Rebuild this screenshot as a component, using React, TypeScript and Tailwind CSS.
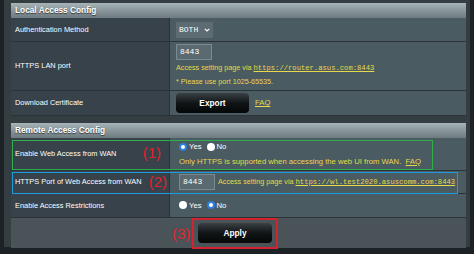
import React from "react";

const sans = { fontFamily: '"Liberation Sans", Arial, sans-serif' };

function SectionHeader({ title }: { title: string }) {
  return (
    <div className="flex h-[15px] items-center bg-gradient-to-b from-[#a6b3b7] to-[#6d7b80] px-[4px] text-[8.3px] font-bold text-white [text-shadow:0_1px_1px_#333]">
      {title}
    </div>
  );
}

function Row({
  label,
  height,
  pad = "pl-[6px]",
  children,
  extra,
}: {
  label: string;
  height: string;
  pad?: string;
  children: React.ReactNode;
  extra?: React.ReactNode;
}) {
  return (
    <div className={`flex border-b border-[#2b3337] ${height}`}>
      <div className="flex w-[158px] shrink-0 items-center justify-between bg-[#37424a] pl-[4px] pr-[8px] text-[7.4px] text-white">
        <span>{label}</span>
        {extra}
      </div>
      <div className={`flex flex-1 flex-col justify-center gap-[3px] border-l border-[#2b3337] bg-[#4a5b62] ${pad} text-[7.2px] text-[#e8d84a]`}>
        {children}
      </div>
    </div>
  );
}

function Radio({ checked, label }: { checked?: boolean; label: string }) {
  return (
    <span className="flex items-center gap-[2px] text-[7.7px] text-white">
      <span
        className={
          checked
            ? "h-[8px] w-[8px] rounded-full border-[2px] border-[#2d7fe0] bg-white"
            : "h-[8px] w-[8px] rounded-full bg-white"
        }
      />
      {label}
    </span>
  );
}

function PortInput() {
  return (
    <div className="flex h-[16px] w-[36px] shrink-0 items-center border border-[#7a8a90] bg-[#5a6a70] pl-[3px] font-['Liberation_Mono',monospace] text-[8px] text-white">
      8443
    </div>
  );
}

function DarkButton({ label, width }: { label: string; width: string }) {
  return (
    <div
      className={`flex h-[20px] ${width} items-center justify-center rounded-[4px] bg-gradient-to-b from-[#3a4145] via-[#111517] to-[#050708] text-[8.3px] font-bold text-white`}
    >
      {label}
    </div>
  );
}

const mono = "font-['Liberation_Mono',monospace] text-[7.2px] underline";

export default function App() {
  return (
    <div className="h-[254px] w-[474px] overflow-hidden bg-[#1c2225]" style={sans}>
      <div className="ml-[4px] h-[247px] w-[466px] bg-[#343d41] px-[7px] pt-[3px]">
        <div className="w-[455px]">
          <SectionHeader title="Local Access Config" />
          <Row label="Authentication Method" height="h-[24px]">
            <div className="flex h-[16px] w-[37px] items-center justify-between bg-[#5c6c72] px-[3px] font-['Liberation_Mono',monospace] text-[8px] text-white">
              BOTH
              <svg width="6" height="4" viewBox="0 0 6 4">
                <path d="M0.8 0.8 L3 3 L5.2 0.8" stroke="#fff" strokeWidth="1.2" fill="none" />
              </svg>
            </div>
          </Row>
          <Row label="HTTPS LAN port" height="h-[49px]">
            <PortInput />
            <div>
              Access setting page via <span className={mono}>https://router.asus.com:8443</span>
            </div>
            <div>* Please use port 1025-65535.</div>
          </Row>
          <Row label="Download Certificate" height="h-[25px]">
            <div className="flex items-center gap-[6px]">
              <DarkButton label="Export" width="w-[73px]" />
              <span className="text-[7.7px] underline">FAQ</span>
            </div>
          </Row>
        </div>

        <div className="mt-[7px] w-[455px]">
          <SectionHeader title="Remote Access Config" />
          <div className="relative">
            <Row
              label="Enable Web Access from WAN"
              height="h-[33px]"
              pad="pl-[9px]"
              extra={<span className="mt-[-2px] text-[15px] text-[#e0232e]">(1)</span>}
            >
              <div className="flex gap-[5px]">
                <Radio checked label="Yes" />
                <Radio label="No" />
              </div>
              <div className="text-[7.7px]">
                Only HTTPS is supported when accessing the web UI from WAN.&nbsp; <span className="underline">FAQ</span>
              </div>
            </Row>
            <div className="pointer-events-none absolute left-[1px] top-[2px] h-[30px] w-[421px] border border-[#2fae4e]" />
          </div>
          <div className="relative">
            <Row
              label="HTTPS Port of Web Access from WAN"
              height="h-[23px]"
              pad="pl-[9px]"
              extra={<span className="mr-[-6px] text-[15px] text-[#e0232e]">(2)</span>}
            >
              <div className="flex items-center gap-[3px]">
                <PortInput />
                <span>
                  Access setting page via <span className={mono}>https://wl.test2020.asuscomm.com:8443</span>
                </span>
              </div>
            </Row>
            <div className="pointer-events-none absolute left-[1px] top-[1px] h-[22px] w-[446px] border border-[#1e9be0]" />
          </div>
          <Row label="Enable Access Restrictions" height="h-[24px]" pad="pl-[9px]">
            <div className="flex gap-[5px]">
              <Radio label="Yes" />
              <Radio checked label="No" />
            </div>
          </Row>
          <div className="flex h-[30px] items-center bg-[#4a5458] pl-[161px]">
            <span className="mt-[2px] w-[20px] text-[15px] text-[#e0232e]">(3)</span>
            <div className="flex h-[31px] w-[86px] items-center justify-center border-[2px] border-[#d1242f]">
              <DarkButton label="Apply" width="w-[74px]" />
            </div>
          </div>
        </div>
      </div>
    </div>
  );
}
